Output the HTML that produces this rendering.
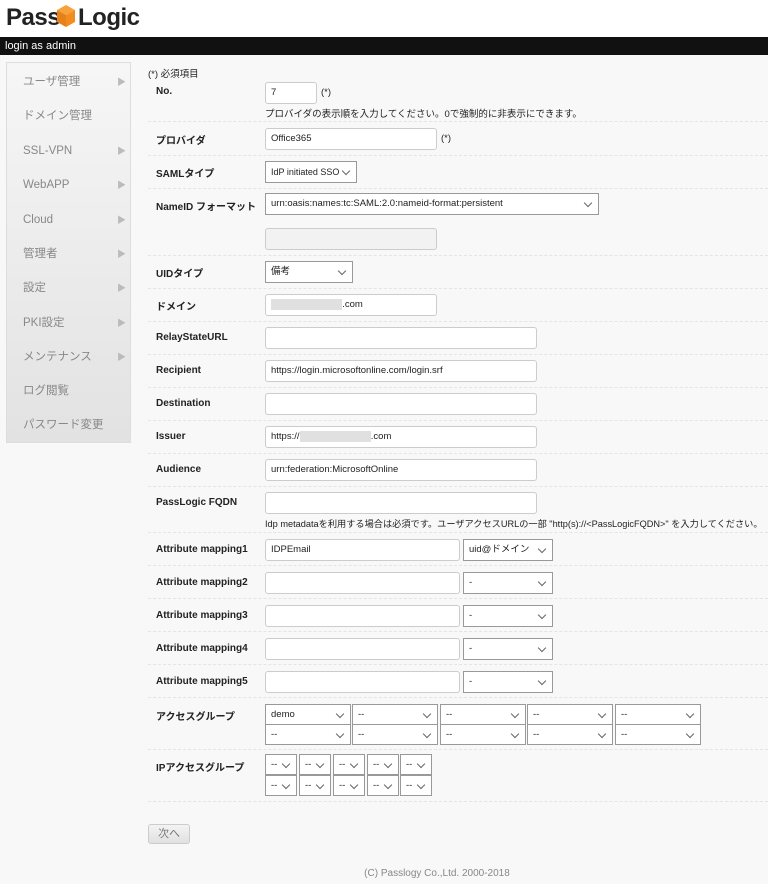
<!DOCTYPE html>
<html><head><meta charset="utf-8"><style>
*{box-sizing:border-box;margin:0;padding:0}
body{width:768px;height:884px;background:#f8f8f8;font-family:"Liberation Sans","Noto Sans CJK JP",sans-serif;font-size:10px;color:#222;position:relative;overflow:hidden}
.a{position:absolute}
.hdr{left:0;top:0;width:768px;height:37px;background:#fff}
.bar{left:0;top:37px;width:768px;height:18px;background:#111;color:#fff;font-size:11px;padding:3px 0 0 5px}
.side{left:6px;top:62px;width:125px;height:381px;border:1px solid #ddd;background:linear-gradient(#f6f6f6,#e2e2e2)}
.si{position:absolute;left:16px;font-size:11.5px;color:#888;line-height:14px}
.ar{position:absolute;left:110px;color:#bbb;font-size:9px;line-height:14px}
.lb{left:156px;font-weight:bold;font-size:10px}
.in,.sel{position:absolute;height:22px;background:#fff;font-size:9.5px;line-height:20px;padding:0 5px;white-space:nowrap;overflow:hidden}
.in{border:1px solid #ccc;border-radius:3px}
.sel{border:1px solid #999;overflow:visible}
.sel:after{content:"";position:absolute;right:7px;top:6px;width:5px;height:5px;border-right:1px solid #666;border-bottom:1px solid #666;transform:rotate(45deg)}
.hr{left:148px;width:620px;border-top:1px dashed #e4e4e4;height:0}
.t{font-size:9.5px;white-space:nowrap}
</style></head><body>
<div class="a hdr"></div>
<div class="a" style="left:6px;top:4px;font-size:24px;font-weight:bold;letter-spacing:-0.5px">Pass</div>
<svg class="a" style="left:56px;top:4px" width="20" height="24" viewBox="0 0 20 24"><polygon points="10,1 19,6 10,11 1,6" fill="#f7a23a"/><polygon points="1,6 10,11 10,23 1,18" fill="#e8801a"/><polygon points="19,6 10,11 10,23 19,18" fill="#f28c1e"/></svg>
<div class="a" style="left:78px;top:4px;font-size:24px;font-weight:bold;letter-spacing:-0.5px">Logic</div>
<div class="a bar">login as admin</div>
<div class="a side">
<div class="si" style="top:12px">ユーザ管理</div><div class="ar" style="top:12px">▶</div>
<div class="si" style="top:46px">ドメイン管理</div>
<div class="si" style="top:81px">SSL-VPN</div><div class="ar" style="top:81px">▶</div>
<div class="si" style="top:115px">WebAPP</div><div class="ar" style="top:115px">▶</div>
<div class="si" style="top:150px">Cloud</div><div class="ar" style="top:150px">▶</div>
<div class="si" style="top:184px">管理者</div><div class="ar" style="top:184px">▶</div>
<div class="si" style="top:218px">設定</div><div class="ar" style="top:218px">▶</div>
<div class="si" style="top:253px">PKI設定</div><div class="ar" style="top:253px">▶</div>
<div class="si" style="top:287px">メンテナンス</div><div class="ar" style="top:287px">▶</div>
<div class="si" style="top:321px">ログ閲覧</div>
<div class="si" style="top:355px">パスワード変更</div>
</div>

<div class="a t" style="left:148px;top:66px">(*) 必須項目</div>
<div class="a lb" style="top:86px">No.</div>
<div class="in" style="left:265px;top:82px;width:52px">7</div>
<div class="a t" style="left:321px;top:87px">(*)</div>
<div class="a t" style="left:265px;top:106px">プロバイダの表示順を入力してください。0で強制的に非表示にできます。</div>
<div class="a hr" style="top:121px"></div>
<div class="a lb" style="top:132px">プロバイダ</div>
<div class="in" style="left:265px;top:128px;width:172px">Office365</div>
<div class="a t" style="left:441px;top:133px">(*)</div>
<div class="a hr" style="top:155px"></div>
<div class="a lb" style="top:165px">SAMLタイプ</div>
<div class="sel" style="left:265px;top:161px;width:92px;font-size:9px">IdP initiated SSO</div>
<div class="a hr" style="top:188px"></div>
<div class="a lb" style="top:198px">NameID フォーマット</div>
<div class="sel" style="left:265px;top:193px;width:334px">urn:oasis:names:tc:SAML:2.0:nameid-format:persistent</div>
<div class="in" style="left:265px;top:228px;width:172px;background:#f2f2f2"></div>
<div class="a hr" style="top:255px"></div>
<div class="a lb" style="top:265px">UIDタイプ</div>
<div class="sel" style="left:265px;top:261px;width:88px">備考</div>
<div class="a hr" style="top:288px"></div>
<div class="a lb" style="top:298px">ドメイン</div>
<div class="in" style="left:265px;top:294px;width:172px"><span style="background:#e0e0e0;color:#e0e0e0">xxxxxxxxxxxxxxx</span>.com</div>
<div class="a hr" style="top:321px"></div>
<div class="a lb" style="top:332px">RelayStateURL</div>
<div class="in" style="left:265px;top:327px;width:272px"></div>
<div class="a hr" style="top:354px"></div>
<div class="a lb" style="top:365px">Recipient</div>
<div class="in" style="left:265px;top:360px;width:272px">https://login.microsoftonline.com/login.srf</div>
<div class="a hr" style="top:387px"></div>
<div class="a lb" style="top:398px">Destination</div>
<div class="in" style="left:265px;top:393px;width:272px"></div>
<div class="a hr" style="top:420px"></div>
<div class="a lb" style="top:431px">Issuer</div>
<div class="in" style="left:265px;top:426px;width:272px">https://<span style="background:#e0e0e0;color:#e0e0e0">xxxxxxxxxxxxxxx</span>.com</div>
<div class="a hr" style="top:453px"></div>
<div class="a lb" style="top:464px">Audience</div>
<div class="in" style="left:265px;top:459px;width:272px">urn:federation:MicrosoftOnline</div>
<div class="a hr" style="top:486px"></div>
<div class="a lb" style="top:497px">PassLogic FQDN</div>
<div class="in" style="left:265px;top:492px;width:272px"></div>
<div class="a t" style="left:265px;top:516px;font-size:9.2px">Idp metadataを利用する場合は必須です。ユーザアクセスURLの一部 "http(s)://&lt;PassLogicFQDN&gt;" を入力してください。</div>
<div class="a hr" style="top:532px"></div>
<div class="a lb" style="top:544px">Attribute mapping1</div>
<div class="in" style="left:265px;top:539px;width:195px">IDPEmail</div>
<div class="sel" style="left:463px;top:539px;width:90px">uid@ドメイン</div>
<div class="a hr" style="top:565px"></div>
<div class="a lb" style="top:577px">Attribute mapping2</div>
<div class="in" style="left:265px;top:572px;width:195px"></div>
<div class="sel" style="left:463px;top:572px;width:90px">-</div>
<div class="a hr" style="top:598px"></div>
<div class="a lb" style="top:610px">Attribute mapping3</div>
<div class="in" style="left:265px;top:605px;width:195px"></div>
<div class="sel" style="left:463px;top:605px;width:90px">-</div>
<div class="a hr" style="top:631px"></div>
<div class="a lb" style="top:643px">Attribute mapping4</div>
<div class="in" style="left:265px;top:638px;width:195px"></div>
<div class="sel" style="left:463px;top:638px;width:90px">-</div>
<div class="a hr" style="top:664px"></div>
<div class="a lb" style="top:676px">Attribute mapping5</div>
<div class="in" style="left:265px;top:671px;width:195px"></div>
<div class="sel" style="left:463px;top:671px;width:90px">-</div>
<div class="a hr" style="top:697px"></div>
<div class="a lb" style="top:708px">アクセスグループ</div>
<div class="sel" style="left:265px;top:704px;width:86px;height:21px;line-height:19px">demo</div>
<div class="sel" style="left:352px;top:704px;width:86px;height:21px;line-height:19px">--</div>
<div class="sel" style="left:440px;top:704px;width:86px;height:21px;line-height:19px">--</div>
<div class="sel" style="left:527px;top:704px;width:86px;height:21px;line-height:19px">--</div>
<div class="sel" style="left:615px;top:704px;width:86px;height:21px;line-height:19px">--</div>
<div class="sel" style="left:265px;top:724px;width:86px;height:21px;line-height:19px">--</div>
<div class="sel" style="left:352px;top:724px;width:86px;height:21px;line-height:19px">--</div>
<div class="sel" style="left:440px;top:724px;width:86px;height:21px;line-height:19px">--</div>
<div class="sel" style="left:527px;top:724px;width:86px;height:21px;line-height:19px">--</div>
<div class="sel" style="left:615px;top:724px;width:86px;height:21px;line-height:19px">--</div>
<div class="a hr" style="top:749px"></div>
<div class="a lb" style="top:759px">IPアクセスグループ</div>
<div class="sel" style="left:265px;top:754px;width:32px;height:21px;line-height:19px">--</div>
<div class="sel" style="left:299px;top:754px;width:32px;height:21px;line-height:19px">--</div>
<div class="sel" style="left:333px;top:754px;width:32px;height:21px;line-height:19px">--</div>
<div class="sel" style="left:367px;top:754px;width:32px;height:21px;line-height:19px">--</div>
<div class="sel" style="left:400px;top:754px;width:32px;height:21px;line-height:19px">--</div>
<div class="sel" style="left:265px;top:775px;width:32px;height:21px;line-height:19px">--</div>
<div class="sel" style="left:299px;top:775px;width:32px;height:21px;line-height:19px">--</div>
<div class="sel" style="left:333px;top:775px;width:32px;height:21px;line-height:19px">--</div>
<div class="sel" style="left:367px;top:775px;width:32px;height:21px;line-height:19px">--</div>
<div class="sel" style="left:400px;top:775px;width:32px;height:21px;line-height:19px">--</div>
<div class="a hr" style="top:801px"></div>
<div class="a" style="left:148px;top:824px;width:42px;height:20px;border:1px solid #ccc;border-radius:3px;background:linear-gradient(#f4f4f4,#e0e0e0);color:#777;font-size:11px;text-align:center;line-height:18px">次へ</div>
<div class="a" style="left:0;width:874px;top:868px;text-align:center;color:#888;font-size:10px">(C) Passlogy Co.,Ltd. 2000-2018</div>
</body></html>
